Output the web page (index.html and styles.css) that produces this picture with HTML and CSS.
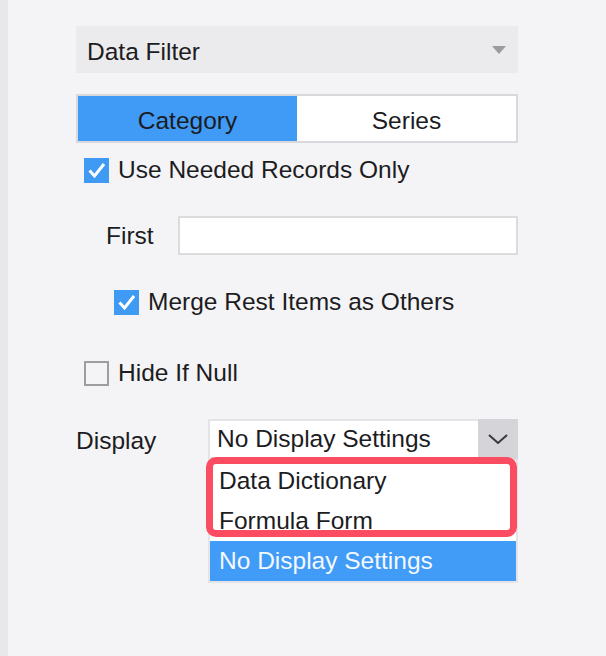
FILE: index.html
```html
<!DOCTYPE html>
<html>
<head>
<meta charset="utf-8">
<link rel="stylesheet" href="styles.css">
</head>
<body>
<div class="panel">
  <div class="section-header">
    <span>Data Filter</span>
    <span class="caret"></span>
  </div>

  <div class="tabs">
    <div class="tab tab-active">Category</div>
    <div class="tab">Series</div>
  </div>

  <div class="check-row row-records">
    <span class="checkbox checked">
      <svg viewBox="0 0 25 25" width="25" height="25"><path d="M5.5 12.5 L10.5 18 L20 6" fill="none" stroke="#fff" stroke-width="3"/></svg>
    </span>
    <span class="check-label">Use Needed Records Only</span>
  </div>

  <div class="field-row">
    <span class="field-label">First</span>
    <div class="text-input"></div>
  </div>

  <div class="check-row row-merge">
    <span class="checkbox checked">
      <svg viewBox="0 0 25 25" width="25" height="25"><path d="M5.5 12.5 L10.5 18 L20 6" fill="none" stroke="#fff" stroke-width="3"/></svg>
    </span>
    <span class="check-label">Merge Rest Items as Others</span>
  </div>

  <div class="check-row row-hide">
    <span class="checkbox"></span>
    <span class="check-label">Hide If Null</span>
  </div>

  <div class="display-row">
    <span class="display-label">Display</span>
    <div class="select-wrap">
      <div class="select">
        <span class="select-value">No Display Settings</span>
        <span class="select-arrow">
          <svg viewBox="0 0 20 10" width="20" height="10"><polyline points="1,1 10,9 19,1" fill="none" stroke="#3a3a3a" stroke-width="2"/></svg>
        </span>
      </div>
      <ul class="options">
        <li class="option">Data Dictionary</li>
        <li class="option">Formula Form</li>
        <li class="option option-selected">No Display Settings</li>
      </ul>
      <div class="highlight-box"></div>
    </div>
  </div>
</div>
</body>
</html>
```

FILE: styles.css
```css
html, body {
  margin: 0;
  padding: 0;
}
body {
  background: #f4f4f6;
  border-left: 8px solid #e8e8ea;
  min-height: 656px;
  box-sizing: border-box;
  font-family: "Liberation Sans", Arial, sans-serif;
  font-size: 24.5px;
  color: #1c1c22;
}
.panel {
  width: 442px;
  margin-left: 68px;
  padding-top: 26px;
}
.section-header {
  height: 47px;
  box-sizing: border-box;
  padding: 4px 12px 0 11px;
  background: #ebebed;
  display: flex;
  align-items: center;
  justify-content: space-between;
}
.caret {
  width: 0;
  height: 0;
  border-left: 7px solid transparent;
  border-right: 7px solid transparent;
  border-top: 8px solid #9c9c9c;
  margin-top: -4px;
}
.tabs {
  margin-top: 21px;
  height: 49px;
  box-sizing: border-box;
  border: 2px solid #d9d9dd;
  display: grid;
  grid-template-columns: 1fr 1fr;
  background: #fff;
}
.tab {
  display: flex;
  align-items: center;
  justify-content: center;
  padding-top: 4px;
}
.tab-active {
  background: #409bf6;
}
.check-row {
  display: flex;
  align-items: flex-start;
  line-height: 24px;
}
.checkbox {
  width: 25px;
  height: 25px;
  box-sizing: border-box;
  flex: none;
  border: 2px solid #9d9d9d;
  margin-right: 9px;
}
.checkbox.checked {
  border: none;
  background: #3e9af3;
}
.checkbox svg {
  display: block;
}
.row-records {
  margin-top: 15px;
  padding-left: 8px;
}
.row-merge {
  margin-top: 35px;
  padding-left: 38px;
}
.row-hide {
  margin-top: 46px;
  padding-left: 8px;
}
.field-row {
  margin-top: 33px;
  display: flex;
  height: 39px;
  line-height: 39px;
}
.field-label {
  width: 72px;
  margin-left: 30px;
}
.text-input {
  flex: 1;
  background: #fff;
  border: 2px solid #dcdcdf;
  box-sizing: border-box;
}
.display-row {
  margin-top: 33px;
  display: flex;
  align-items: flex-start;
}
.display-label {
  width: 132px;
  line-height: 40px;
  padding-top: 2px;
}
.select-wrap {
  position: relative;
  width: 310px;
}
.select {
  height: 40px;
  box-sizing: border-box;
  border: 2px solid #e4e4e6;
  background: #fff;
  display: flex;
}
.select-value {
  flex: 1;
  padding-left: 7px;
  line-height: 36px;
}
.select-arrow {
  width: 40px;
  margin: -2px -2px -2px 0;
  background: #d5d5d9;
  display: flex;
  align-items: center;
  justify-content: center;
}
.select-arrow svg {
  display: block;
}
.options {
  list-style: none;
  margin: 0;
  padding: 0;
  border: 2px solid #e4e4e6;
  background: #fff;
}
.option {
  height: 40px;
  line-height: 40px;
  padding-left: 9px;
}
.option-selected {
  background: #409cf6;
  color: #f4f8ff;
}
.highlight-box {
  position: absolute;
  left: -2px;
  top: 38px;
  width: 311px;
  height: 80px;
  box-sizing: border-box;
  border: 7px solid #fc4c61;
  border-radius: 10px;
}
```
